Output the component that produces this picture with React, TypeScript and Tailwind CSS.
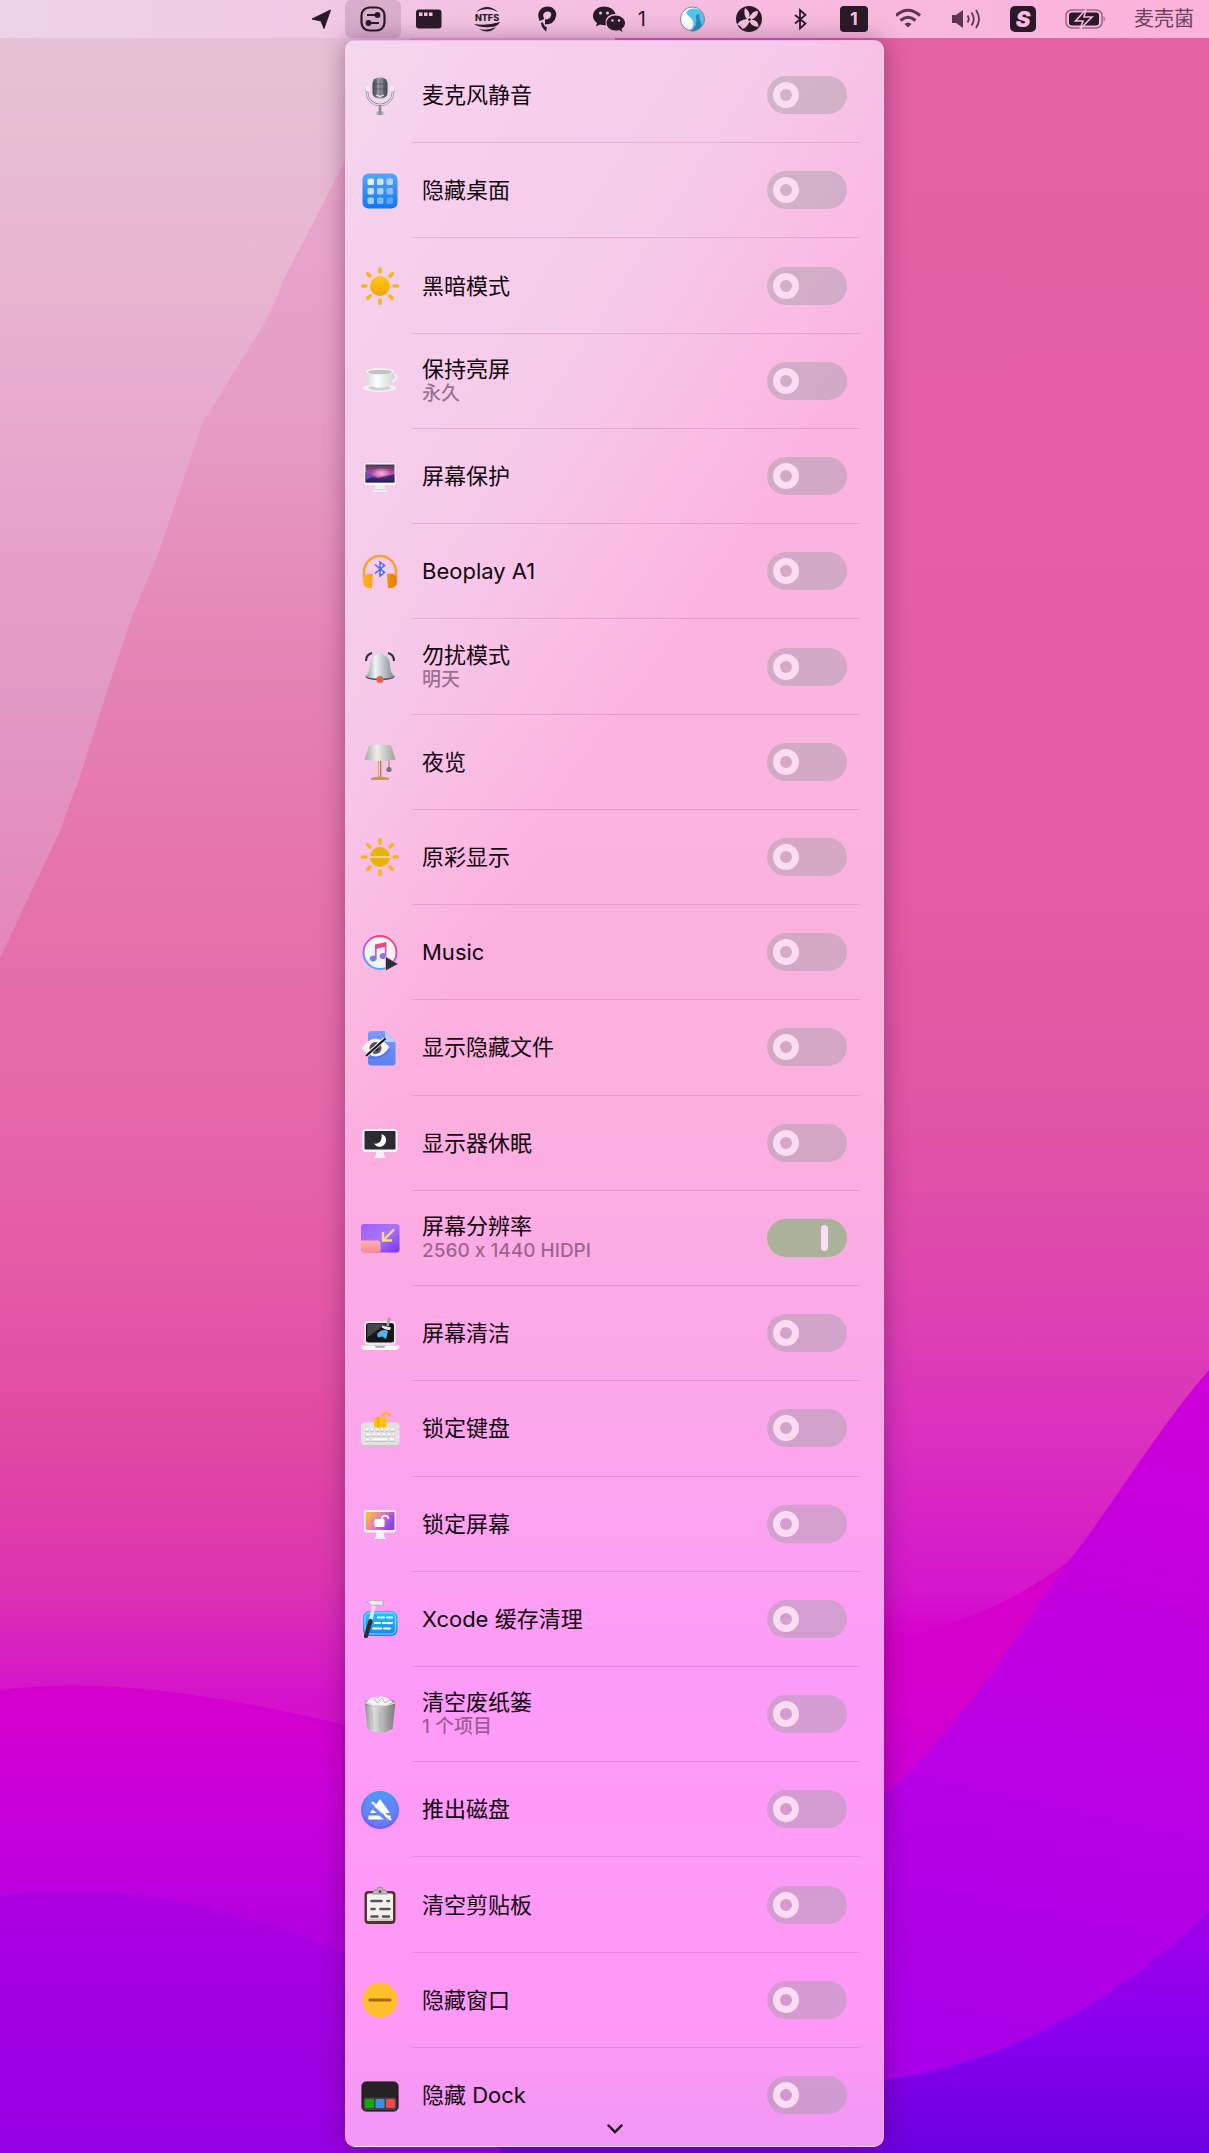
import React, { ReactNode, useState } from "react";
import clsx from "clsx";

type SwitchItem = {
  id: string;
  title: string;
  subtitle?: string;
  icon: ReactNode;
  on?: boolean;
};

const Icon = ({ children }: { children: ReactNode }) => (
  <svg viewBox="0 0 40 40" className="h-10 w-10 shrink-0" aria-hidden="true">
    {children}
  </svg>
);

const MicIcon = () => (
  <Icon>
    <defs>
      <linearGradient id="mic" x1="0" x2="1">
        <stop offset="0" stopColor="#3d3d48" />
        <stop offset="0.45" stopColor="#a9a9b6" />
        <stop offset="1" stopColor="#3a3a44" />
      </linearGradient>
      <linearGradient id="micStand" x1="0" x2="1">
        <stop offset="0" stopColor="#f4f4f6" />
        <stop offset="0.5" stopColor="#85858c" />
        <stop offset="1" stopColor="#f0f0f2" />
      </linearGradient>
    </defs>
    <path d="M7 13v3a13 13 0 0 0 26 0v-3" fill="none" stroke="#74747c" strokeWidth="2.4" />
    <path d="M7 12v4a13 13 0 0 0 26 0v-4" fill="none" stroke="#e3e3e7" strokeWidth="1.3" />
    <path d="M6 10h3v5H6zM31 10h3v5h-3z" fill="#f1f1f4" />
    <path d="M18.5 29h3v6l4.500 2v2H14v-2l4.500-2z" fill="url(#micStand)" />
    <rect x="12.500" y="1.500" width="15" height="21" rx="6" fill="url(#mic)" />
    <path d="M16 4v14M20 3v16M24 4v14M13 8h14M13 13h14" stroke="#4b4b57" strokeWidth="0.7" />
    <path d="M16 19q4 3 8 0" stroke="#efeff4" strokeWidth="1" fill="none" />
  </Icon>
);

const GridIcon = () => (
  <Icon>
    <defs>
      <linearGradient id="grid" x1="0" y1="0" x2="0" y2="1">
        <stop offset="0" stopColor="#56a5fb" />
        <stop offset="1" stopColor="#0d77f8" />
      </linearGradient>
    </defs>
    <rect x="2.500" y="2.500" width="35" height="35" rx="6" fill="url(#grid)" />
    {[0, 1, 2].map((r) =>
      [0, 1, 2].map((c) => (
        <rect
          key={`${r}${c}`}
          x={7.5 + c * 9.5}
          y={7.5 + r * 9.5}
          width="6.500"
          height="6.500"
          rx="1.500"
          fill="#fff"
          opacity={0.88 - (r + c) * 0.15}
        />
      ))
    )}
  </Icon>
);

const SunIcon = ({ split }: { split?: boolean }) => (
  <Icon>
    <defs>
      <linearGradient id="sun" x1="0" y1="0" x2="0" y2="1">
        <stop offset="0" stopColor="#ffcb12" />
        <stop offset="1" stopColor="#efa500" />
      </linearGradient>
    </defs>
    {[0, 45, 90, 135, 180, 225, 270, 315].map((deg) => (
      <path
        key={deg}
        d="M20 2.700v3.300"
        stroke="#fbb418"
        strokeWidth="3.600"
        strokeLinecap="round"
        transform={`rotate(${deg} 20 20)`}
      />
    ))}
    <circle cx="20" cy="20" r="10" fill={split ? "#e8b306" : "url(#sun)"} />
    {split && <path d="M10 20h20" stroke="#fbd9a0" strokeWidth="1.600" />}
  </Icon>
);

const CupIcon = () => (
  <Icon>
    <defs>
      <linearGradient id="cup" x1="0" x2="1">
        <stop offset="0" stopColor="#d9d9d7" />
        <stop offset="0.4" stopColor="#ffffff" />
        <stop offset="1" stopColor="#d4d4d2" />
      </linearGradient>
    </defs>
    <ellipse cx="19.500" cy="27" rx="17" ry="4" fill="#f1f0ef" />
    <ellipse cx="19.500" cy="27" rx="11" ry="2.600" fill="#d3d0d0" />
    <path d="M32 13c6-1 7 7-3 8" fill="none" stroke="#f3f1f1" strokeWidth="2" />
    <path d="M6 10c0 10 4 17 14 17s14-7 14-17z" fill="url(#cup)" />
    <ellipse cx="20" cy="10.500" rx="14" ry="3.300" fill="#f7f7f6" />
    <ellipse cx="20" cy="11" rx="12" ry="2.300" fill="#c2c3c1" />
  </Icon>
);

const ScreenSaverIcon = () => (
  <Icon>
    <defs>
      <linearGradient id="saver" x1="0" y1="0" x2="0" y2="1">
        <stop offset="0" stopColor="#4b3550" />
        <stop offset="0.55" stopColor="#c64fae" />
        <stop offset="1" stopColor="#1c2450" />
      </linearGradient>
      <radialGradient id="saverGlow" cx="0.55" cy="0.5" r="0.35">
        <stop offset="0" stopColor="#ffb3de" />
        <stop offset="1" stopColor="#ffb3de" stopOpacity="0" />
      </radialGradient>
    </defs>
    <path d="M15 27h10v5l2 3H13l2-3z" fill="#f0edf2" />
    <rect x="4" y="6" width="32" height="22" rx="2" fill="#fafafa" />
    <rect x="5.500" y="7.500" width="29" height="18" fill="url(#saver)" />
    <rect x="5.500" y="7.500" width="29" height="18" fill="url(#saverGlow)" />
    <path d="M5.500 15l12 6 17-4v8.500h-29z" fill="#2b1c66" opacity="0.700" />
    <path d="M5.500 15l12 6-6-1-6 3z" fill="#5a63d8" opacity="0.800" />
    <path d="M14 32.500h12" stroke="#d9d0d9" />
  </Icon>
);

const HeadphonesIcon = () => (
  <Icon>
    <defs>
      <linearGradient id="ear" x1="0" x2="1">
        <stop offset="0" stopColor="#ffb02e" />
        <stop offset="1" stopColor="#e98100" />
      </linearGradient>
    </defs>
    <path d="M4 26v-6a16 16 0 0 1 32 0v6" fill="none" stroke="#f5a13a" strokeWidth="2.600" />
    <path d="M13 22c-7-2-10 2-10 7s3 8 9 7zM27 22c7-2 10 2 10 7s-3 8-9 7z" fill="url(#ear)" />
    <path
      d="M15 12.500l9.500 8-4.500 3.500V10l4.500 3.500-9.500 8"
      fill="none"
      stroke="#3f6df2"
      strokeWidth="1.500"
    />
  </Icon>
);

const BellIcon = () => (
  <Icon>
    <defs>
      <linearGradient id="bell" x1="0" x2="1">
        <stop offset="0" stopColor="#8a9399" />
        <stop offset="0.35" stopColor="#eef4f7" />
        <stop offset="1" stopColor="#7b858b" />
      </linearGradient>
    </defs>
    <path d="M6 14c0-4 2-7 6-8M34 14c0-4-2-7-6-8" fill="none" stroke="#33303a" strokeWidth="2" />
    <path
      d="M20 5c2 0 2.500 1.500 2.500 2.500 5 1.500 7 5 7.500 10 .5 6 1 9 5 12-3 4-27 4-30 0 4-3 4.500-6 5-12 .5-5 2.500-8.500 7.500-10C17.500 6.500 18 5 20 5z"
      fill="url(#bell)"
    />
    <path d="M5.500 29.500c7 3 22 3 29 0-1 5-28 5-29 0z" fill="#4c5155" />
    <circle cx="20" cy="32.500" r="3.500" fill="#ee5f4c" />
  </Icon>
);

const LampIcon = () => (
  <Icon>
    <defs>
      <linearGradient id="lamp" x1="0" x2="1">
        <stop offset="0" stopColor="#a9a6a2" />
        <stop offset="0.4" stopColor="#f0efec" />
        <stop offset="1" stopColor="#a19d99" />
      </linearGradient>
    </defs>
    <path d="M29 18v9" stroke="#8c8389" strokeWidth="1" />
    <circle cx="29" cy="27.500" r="2.600" fill="#77717b" />
    <path d="M20 18v18" stroke="#b98a5c" strokeWidth="3" />
    <path d="M19.500 18v18" stroke="#e9c69c" strokeWidth="1" />
    <path d="M11 36q9-3 18 0v2H11z" fill="#c79658" />
    <path d="M9 3.500q11-2 22 0l4.500 14q-15.500 3-31 0z" fill="url(#lamp)" />
  </Icon>
);

const MusicIcon = () => (
  <Icon>
    <defs>
      <linearGradient id="ring" x1="0.7" y1="0" x2="0.3" y2="1">
        <stop offset="0" stopColor="#fb4060" />
        <stop offset="0.5" stopColor="#b35cf0" />
        <stop offset="1" stopColor="#3bb2f6" />
      </linearGradient>
      <linearGradient id="note" x1="0" y1="0" x2="0" y2="1">
        <stop offset="0" stopColor="#fb3f5c" />
        <stop offset="0.5" stopColor="#c060d8" />
        <stop offset="1" stopColor="#4e8cf6" />
      </linearGradient>
    </defs>
    <circle cx="20" cy="19.500" r="16.500" fill="#f6f3f6" stroke="url(#ring)" strokeWidth="2" />
    <path
      d="M15 11.500l11.500-2.500v14a3.500 3 0 1 1-1.800-2.500V14l-8 1.700v9.800a3.500 3 0 1 1-1.700-2.500z"
      fill="url(#note)"
    />
    <path d="M25.500 23.500l13 7.500-13 7z" fill="#2e2c3a" stroke="#fbb6de" strokeWidth="0.800" />
  </Icon>
);

const HiddenFileIcon = () => (
  <Icon>
    <defs>
      <linearGradient id="file" x1="0" y1="0" x2="0" y2="1">
        <stop offset="0" stopColor="#7a9bf8" />
        <stop offset="1" stopColor="#5a82ef" />
      </linearGradient>
    </defs>
    <path
      d="M11.500 3H25l10.500 11v20a3.500 3.500 0 0 1-3.500 3.500H11.500A3.500 3.500 0 0 1 8 34V6.500A3.500 3.500 0 0 1 11.500 3z"
      fill="url(#file)"
    />
    <path d="M25 3l10.500 11H27a2 2 0 0 1-2-2z" fill="#b9ccff" />
    <path d="M8 29q13 3 22-8" stroke="#4466c9" strokeWidth="2" fill="none" opacity="0.5" />
    <path d="M1.500 20.500Q14 2 29.500 19 18 37 1.500 20.500z" fill="#f7eff0" />
    <circle cx="15.500" cy="20" r="6" fill="#55525c" />
    <circle cx="15.500" cy="20" r="3" fill="#17151b" />
    <path d="M6 28L24.500 11" stroke="#f7eff0" strokeWidth="4" />
    <path d="M6 28L25.500 10.500" stroke="#17151b" strokeWidth="2.200" />
  </Icon>
);

const DisplaySleepIcon = () => (
  <Icon>
    <path d="M16 28h8v4l2 3H14l2-3z" fill="#f3f0f4" />
    <rect x="2.500" y="6" width="35" height="23" rx="3" fill="#f5f3f6" />
    <rect x="4.500" y="8" width="31" height="18.500" rx="1" fill="#2c2a33" />
    <path d="M21.500 11a6.500 6.500 0 1 1-7.500 9.500c6 1 8.500-4 7.500-9.500z" fill="#fff" />
  </Icon>
);

const ResolutionIcon = () => (
  <Icon>
    <defs>
      <linearGradient id="res" x1="0" y1="0" x2="1" y2="1">
        <stop offset="0" stopColor="#a45bfa" />
        <stop offset="0.5" stopColor="#a676fb" />
        <stop offset="1" stopColor="#7a30f5" />
      </linearGradient>
      <linearGradient id="resPink" x1="0" y1="0" x2="0" y2="1">
        <stop offset="0" stopColor="#ffb0ae" />
        <stop offset="1" stopColor="#ff8a96" />
      </linearGradient>
    </defs>
    <rect x="1" y="6" width="38.500" height="28.500" rx="3" fill="url(#res)" />
    <path d="M1 22.500h16.500a3 3 0 0 1 3 3v9H4a3 3 0 0 1-3-3z" fill="url(#resPink)" />
    <path d="M34 11.500L23.500 22M23 14v8.500h9" fill="none" stroke="#fbd591" strokeWidth="2.400" />
  </Icon>
);

const CleanIcon = () => (
  <Icon>
    <rect x="4.500" y="7" width="31" height="24" rx="4" fill="#ece7ec" />
    <rect x="6" y="9" width="28" height="19.500" rx="2.500" fill="#17171b" />
    <path d="M7.500 9.500h19L7 23.500z" fill="#45454b" />
    <path d="M17 20q5-6 11-3l-2 8-4-2.500-4 1z" fill="#4fb4e8" />
    <path d="M29.500 4l-2 8" stroke="#a2a2a6" strokeWidth="2.800" />
    <path d="M22 11.500l9 2-1 2.500q-5 0-8-2.500z" fill="#ececf0" />
    <path d="M1 31.500h38.500q0 4.500-5 4.500H6q-5 0-5-4.500z" fill="#fbfafb" />
    <path d="M14 31.500h12l-2 2.500h-8z" fill="#b7b1b8" />
  </Icon>
);

const KeyboardIcon = () => (
  <Icon>
    <rect x="1" y="14" width="38.500" height="23.500" rx="3.500" fill="#c9c5c9" />
    <rect x="1" y="13.500" width="38.500" height="22.500" rx="3.500" fill="#e4e1e3" />
    <path
      d="M5.500 21h3m2 0h3m2 0h3m2 0h3m2 0h3m2 0h4M5.500 26h5m2 0h3m2 0h3m2 0h3m2 0h3m2 0h2M5.500 31h4m2 0h16m2 0h5"
      stroke="#a09ca1"
      strokeWidth="2.800"
    />
    <path
      d="M5.500 20.500h3m2 0h3m2 0h3m2 0h3m2 0h3m2 0h4M5.500 25.500h5m2 0h3m2 0h3m2 0h3m2 0h3m2 0h2M5.500 30.500h4m2 0h16m2 0h5"
      stroke="#fff"
      strokeWidth="2.400"
    />
    <path d="M22 9c0-7 8.500-6 8-1" fill="none" stroke="#f7b70b" strokeWidth="2.200" />
    <rect x="14" y="8" width="12.500" height="10.500" rx="2" fill="#fbc10d" />
    <path d="M18 8v10.500" stroke="#e39c00" />
  </Icon>
);

const LockScreenIcon = () => (
  <Icon>
    <defs>
      <linearGradient id="lockScreen" x1="0" y1="0" x2="1" y2="0.4">
        <stop offset="0" stopColor="#fdc320" />
        <stop offset="0.5" stopColor="#e783b2" />
        <stop offset="1" stopColor="#9042e6" />
      </linearGradient>
    </defs>
    <path d="M16 28h8v4l2 3H14l2-3z" fill="#f3f0f4" />
    <rect x="4" y="6" width="32" height="22.500" rx="3" fill="#fbf8fb" />
    <rect x="5.500" y="8" width="29" height="18" rx="1" fill="url(#lockScreen)" />
    <path d="M21.500 16c0-6 7-5.500 7-1" fill="none" stroke="#fff" strokeWidth="1.700" />
    <rect x="14.500" y="15" width="10" height="8" rx="1.500" fill="#fff" />
  </Icon>
);

const XcodeIcon = () => (
  <Icon>
    <defs>
      <linearGradient id="xcode" x1="0" y1="0" x2="0" y2="1">
        <stop offset="0" stopColor="#25c4fb" />
        <stop offset="1" stopColor="#1585f4" />
      </linearGradient>
    </defs>
    <rect x="3" y="12" width="34.500" height="25" rx="6" fill="url(#xcode)" />
    <rect x="5" y="14" width="30.500" height="21" rx="4.500" fill="none" stroke="#9ce4ff" strokeWidth="0.900" />
    <path
      d="M18 18.500h6M27 18.500h5M15 24h5M23 24h9M13 29.500h8M24 29.500h6"
      stroke="#fff"
      strokeWidth="2"
      strokeLinecap="round"
    />
    <path d="M14 6L10.500 22" stroke="#e6e6e8" strokeWidth="3.600" />
    <path d="M10.500 22L6 37" stroke="#2b2b30" strokeWidth="4.200" strokeLinecap="round" />
    <path d="M6 3q6-3 12-1l5-.5v5.500l-5-1-7 .5q-1-3.500-5-3.500z" fill="#eeeef0" stroke="#9a9aa0" strokeWidth="0.600" />
  </Icon>
);

const TrashIcon = () => (
  <Icon>
    <defs>
      <linearGradient id="trash" x1="0" x2="1">
        <stop offset="0" stopColor="#8e8b8c" />
        <stop offset="0.3" stopColor="#dddcdc" />
        <stop offset="0.7" stopColor="#a8a6a7" />
        <stop offset="1" stopColor="#7c797a" />
      </linearGradient>
    </defs>
    <path d="M4.500 7h31l-3 27q-12.500 7-25 0z" fill="url(#trash)" />
    <ellipse cx="20" cy="7.500" rx="15.500" ry="4" fill="#8a8788" />
    <path d="M6 7l6-5 5 1 4-2 6 2 6 4-6 3H12z" fill="#f3f2f3" />
    <path d="M14 3l3 5 5-5 3 5 5-3" fill="none" stroke="#bcbabb" />
    <path d="M4.500 7.500q15.500 7 31 0" fill="none" stroke="#e6e5e6" strokeWidth="1.300" />
    <path d="M12 16l1 18M20 17v18M28 16l-1 18" stroke="#8d8a8b" strokeWidth="0.500" opacity="0.600" />
  </Icon>
);

const EjectIcon = () => (
  <Icon>
    <defs>
      <linearGradient id="eject" x1="0" y1="0" x2="0" y2="1">
        <stop offset="0" stopColor="#38a0f6" />
        <stop offset="1" stopColor="#7658f5" />
      </linearGradient>
    </defs>
    <circle cx="20" cy="20" r="19" fill="url(#eject)" />
    <circle cx="20" cy="20" r="16.500" fill="#6b8cfb" opacity="0.500" />
    <path d="M20 9l10 14H10zM8.500 25.500h22v4h-22z" fill="#fff" />
    <path d="M9 14l20 18" stroke="#628bf8" strokeWidth="3.500" />
    <path d="M12 12l19 18" stroke="#fff" strokeWidth="2.400" />
  </Icon>
);

const ClipboardIcon = () => (
  <Icon>
    <rect x="4.500" y="6" width="31" height="33" rx="4" fill="#57312f" />
    <rect x="7" y="8.500" width="26" height="27.500" rx="1.500" fill="#f3f2ef" />
    <path d="M8 33.500h24V36H10z" fill="#cdcac6" />
    <path d="M12 9l2-4h3a3 3 0 0 1 6 0h3l2 4z" fill="#bcb9b9" stroke="#807778" strokeWidth="0.700" />
    <circle cx="20" cy="6.500" r="1.600" fill="#6b4545" />
    <path
      d="M11.500 16h10M27.500 16h1.500M11.500 24h3M20.500 24h9M11.500 31.500h6M23 31.500h6"
      stroke="#55535c"
      strokeWidth="2.600"
      strokeLinecap="round"
    />
  </Icon>
);

const MinimizeIcon = () => (
  <Icon>
    <circle cx="20" cy="20" r="17.500" fill="#fdc02c" />
    <path d="M10 20h20" stroke="#a9650b" strokeWidth="3" strokeLinecap="round" />
  </Icon>
);

const DockIcon = () => (
  <Icon>
    <rect x="1.500" y="5.500" width="37" height="30" rx="5" fill="#232124" stroke="#6c5668" strokeWidth="1" />
    <rect x="3.500" y="21.500" width="33" height="12.500" rx="2.500" fill="#4b3e44" />
    <rect x="5" y="23" width="9" height="9" rx="1.500" fill="#12a812" />
    <rect x="15.500" y="23" width="9" height="9" rx="1.500" fill="#3d8fe0" />
    <rect x="26" y="23" width="9" height="9" rx="1.500" fill="#f0494b" />
  </Icon>
);

const ITEMS: SwitchItem[] = [
  { id: "mic", title: "麦克风静音", icon: <MicIcon /> },
  { id: "desktop", title: "隐藏桌面", icon: <GridIcon /> },
  { id: "dark", title: "黑暗模式", icon: <SunIcon /> },
  { id: "awake", title: "保持亮屏", subtitle: "永久", icon: <CupIcon /> },
  { id: "saver", title: "屏幕保护", icon: <ScreenSaverIcon /> },
  { id: "beoplay", title: "Beoplay A1", icon: <HeadphonesIcon /> },
  { id: "dnd", title: "勿扰模式", subtitle: "明天", icon: <BellIcon /> },
  { id: "night", title: "夜览", icon: <LampIcon /> },
  { id: "truetone", title: "原彩显示", icon: <SunIcon split /> },
  { id: "music", title: "Music", icon: <MusicIcon /> },
  { id: "files", title: "显示隐藏文件", icon: <HiddenFileIcon /> },
  { id: "sleep", title: "显示器休眠", icon: <DisplaySleepIcon /> },
  { id: "resolution", title: "屏幕分辨率", subtitle: "2560 x 1440 HIDPI", icon: <ResolutionIcon />, on: true },
  { id: "clean", title: "屏幕清洁", icon: <CleanIcon /> },
  { id: "keyboard", title: "锁定键盘", icon: <KeyboardIcon /> },
  { id: "lock", title: "锁定屏幕", icon: <LockScreenIcon /> },
  { id: "xcode", title: "Xcode 缓存清理", icon: <XcodeIcon /> },
  { id: "trash", title: "清空废纸篓", subtitle: "1 个项目", icon: <TrashIcon /> },
  { id: "eject", title: "推出磁盘", icon: <EjectIcon /> },
  { id: "clipboard", title: "清空剪贴板", icon: <ClipboardIcon /> },
  { id: "windows", title: "隐藏窗口", icon: <MinimizeIcon /> },
  { id: "dock", title: "隐藏 Dock", icon: <DockIcon /> },
];

const Wallpaper = () => (
  <svg
    viewBox="0 0 1209 2153"
    preserveAspectRatio="none"
    className="absolute inset-0 h-full w-full"
    aria-hidden="true"
  >
    <defs>
      <linearGradient id="wLeft" gradientUnits="userSpaceOnUse" x1="0" y1="0" x2="0" y2="1700">
        <stop offset="0.08" stopColor="#e8a8cc" />
        <stop offset="0.25" stopColor="#e69cc4" />
        <stop offset="0.4" stopColor="#e482b4" />
        <stop offset="0.51" stopColor="#e674ac" />
        <stop offset="0.65" stopColor="#e468a8" />
        <stop offset="0.75" stopColor="#e45aa6" />
        <stop offset="0.85" stopColor="#e048a2" />
        <stop offset="0.93" stopColor="#dc34b0" />
        <stop offset="1" stopColor="#d412cc" />
      </linearGradient>
      <linearGradient id="wRight" gradientUnits="userSpaceOnUse" x1="0" y1="0" x2="0" y2="1640">
        <stop offset="0" stopColor="#e462a4" />
        <stop offset="0.55" stopColor="#e45ca2" />
        <stop offset="0.67" stopColor="#e056a4" />
        <stop offset="0.78" stopColor="#de46ae" />
        <stop offset="0.87" stopColor="#da32be" />
        <stop offset="0.97" stopColor="#d416cc" />
        <stop offset="1" stopColor="#d600cc" />
      </linearGradient>
      <linearGradient id="wRidge" gradientUnits="userSpaceOnUse" x1="0" y1="38" x2="0" y2="960">
        <stop offset="0" stopColor="#e6c2d4" />
        <stop offset="0.24" stopColor="#e8b6d0" />
        <stop offset="0.5" stopColor="#e6a4cc" />
        <stop offset="0.72" stopColor="#e298c4" />
        <stop offset="1" stopColor="#e486ba" />
      </linearGradient>
      <linearGradient id="wMagenta" gradientUnits="userSpaceOnUse" x1="0" y1="1560" x2="0" y2="1950">
        <stop offset="0.3" stopColor="#d600cc" />
        <stop offset="0.65" stopColor="#c800da" />
        <stop offset="1" stopColor="#b000e0" />
      </linearGradient>
      <linearGradient id="wViolet" gradientUnits="userSpaceOnUse" x1="0" y1="1880" x2="0" y2="2153">
        <stop offset="0" stopColor="#ae00e2" />
        <stop offset="1" stopColor="#9400e2" />
      </linearGradient>
      <linearGradient id="wWave" gradientUnits="userSpaceOnUse" x1="1209" y1="1370" x2="1050" y2="2080">
        <stop offset="0" stopColor="#ce00d8" />
        <stop offset="0.6" stopColor="#b800e4" />
        <stop offset="1" stopColor="#a800e8" />
      </linearGradient>
      <linearGradient id="wBlue" gradientUnits="userSpaceOnUse" x1="0" y1="1912" x2="0" y2="2153">
        <stop offset="0" stopColor="#9e00e8" />
        <stop offset="0.5" stopColor="#8800ee" />
        <stop offset="1" stopColor="#6c00e0" />
      </linearGradient>
    </defs>
    <rect width="1209" height="2153" fill="url(#wLeft)" />
    <rect x="615" width="594" height="2153" fill="url(#wRight)" />
    <path
      d="M0 0H430L343 165 283 281C268 325 240 360 223 390S205 412 197 439L160 549 133 614 113 673 80 776 60 831 0 958Z"
      fill="url(#wRidge)"
    />
    <path d="M0 1690Q130 1672 345 1725L615 1700 884 1642Q990 1620 1068 1562L1209 1700V2153H0Z" fill="url(#wMagenta)" />
    <path d="M0 1896Q150 1872 345 1953L620 2050V2153H0Z" fill="url(#wViolet)" />
    <path d="M1209 1370C1160 1425 1110 1510 1068 1562 1010 1645 960 1730 884 1795L615 1950V2153H1209Z" fill="url(#wWave)" />
    <path d="M1209 1912Q1060 2055 884 2080L500 2110V2153H1209Z" fill="url(#wBlue)" />
  </svg>
);

const MenuBar = () => (
  <header className="relative flex h-[38px] items-center justify-end gap-7 bg-linear-to-r from-[#ecd4e8] via-[#f5bfe0] to-[#fbb2da] pr-[15px] text-[#2a1a28]">
    <svg viewBox="0 0 24 24" className="h-6 w-6 shrink-0" fill="currentColor" aria-hidden="true">
      <path d="M21.500 3L15 21.500 12 14 3 12z" stroke="currentColor" strokeLinejoin="round" />
    </svg>
    <button
      aria-label="开关"
      className="-mx-4 flex h-[38px] w-14 shrink-0 items-center justify-center rounded-md bg-[#d9aecb]"
    >
      <svg viewBox="0 0 26 26" className="h-[26px] w-[26px]" fill="none" stroke="currentColor" strokeWidth="2.200">
        <rect x="1.500" y="1.500" width="23" height="23" rx="8" />
        <path d="M7 9h9M10 17h9" />
        <circle cx="17.500" cy="9" r="1.800" fill="currentColor" />
        <circle cx="8.500" cy="17" r="1.800" fill="currentColor" />
      </svg>
    </button>
    <svg viewBox="0 0 32 26" className="h-[26px] w-8 shrink-0" aria-hidden="true">
      <rect x="3" y="3.500" width="25.500" height="19" rx="3" fill="currentColor" />
      <path d="M6 6.500h3.500V10H6zM11 6.500h3.500V10H11zM16 6.500h3.500V10H16z" fill="#f3c4e0" />
    </svg>
    <svg viewBox="0 0 28 28" className="h-7 w-7 shrink-0" fill="currentColor" aria-hidden="true">
      <path d="M3 7Q14-3 25 7 14 1 3 7zM1 19q13 2 26-2-2 5-10 5-10 1-16-3zM6 24q9 2 17-2-7 8-17 2z" />
      <text x="14" y="16" textAnchor="middle" fontSize="9" fontWeight="800" fontFamily="Inter">
        NTFS
      </text>
    </svg>
    <svg viewBox="0 0 36 28" className="h-7 w-9 shrink-0" fill="none" stroke="currentColor" aria-hidden="true">
      <path d="M13 15C9.500 8 14 4 18.500 4c5 0 7 4 6 7-1 5-5 6-8.500 6" strokeWidth="5" />
      <circle cx="18" cy="10" r="1.800" fill="#f4c2df" stroke="none" />
      <path d="M14 17.500q1 4 4 5l-1 4q-5-4-5-9z" fill="currentColor" stroke="none" />
    </svg>
    <div className="flex w-[59px] shrink-0 items-center justify-between pr-[6px] text-xl">
      <svg viewBox="0 0 32 26" className="h-[26px] w-8" fill="currentColor" aria-hidden="true">
        <path d="M11 .5C5 .5 0 4.500 0 10c0 3 1.500 5 4 7l-1 3.500 4-2q3 1 6 .5c-2-6 3-11.500 9.500-11C21.500 3.500 16.500.5 11 .5z" />
        <path d="M22.500 9.500c-5 0-9 3.500-9 7.500s4 7.500 9 7.500q2 0 3.500-.5l3.500 2-1-3c2-1.500 3.500-3.500 3.500-6 0-4-4.500-7.500-9.500-7.500z" />
        <circle cx="7.500" cy="7" r="1.500" fill="#f5c2e0" />
        <circle cx="14.500" cy="7" r="1.500" fill="#f5c2e0" />
        <circle cx="19.500" cy="14.500" r="1.200" fill="#f5c2e0" />
        <circle cx="26" cy="14.500" r="1.200" fill="#f5c2e0" />
      </svg>
      <span>1</span>
    </div>
    <svg viewBox="0 0 28 28" className="h-7 w-7 shrink-0" aria-hidden="true">
      <circle cx="12.500" cy="14" r="12" fill="#fff" />
      <path d="M6 7C12 0 24.500 4 24.500 14S15 26.500 9 25.500c6-3 5-9 2-12.500-2-2-4-3-5-6z" fill="#4fc6ee" />
      <path d="M11 26q7-5 5-14 0-3 3-3 1 8 3 11-4 7-11 6z" fill="#2a86bd" />
      <circle cx="12.500" cy="14" r="12" fill="none" stroke="#8d7f92" />
    </svg>
    <svg viewBox="0 0 28 28" className="h-7 w-7 shrink-0" aria-hidden="true">
      <circle cx="13" cy="14" r="13" fill="currentColor" />
      <path
        d="M11 14Q7 10 9 3q5 3 4.500 9Q17 5 22 6q0 6-6.500 8.500 7 1 7 7-6 1-9-5Q11 23 6 24q-1-4-5-4 2-5 10-6z"
        fill="#f7bfe0"
      />
      <circle cx="13.500" cy="14.500" r="1.300" fill="currentColor" />
    </svg>
    <svg viewBox="0 0 20 24" className="h-6 w-5 shrink-0" fill="none" stroke="currentColor" strokeWidth="1.800" aria-hidden="true">
      <path d="M3 8l10.500 8.500-5.500 5V3l5.500 5L3 16.500" />
    </svg>
    <div className="flex h-[26px] w-7 shrink-0 items-center justify-center rounded bg-[#2a1a28] text-lg font-bold text-[#f8bcdf]">
      1
    </div>
    <svg viewBox="0 0 28 22" className="h-[22px] w-7 shrink-0" fill="none" stroke="#5a3650" strokeWidth="3" aria-hidden="true">
      <path d="M0 7.500q12-10.500 24 0M4.500 12.500q7.500-6.500 15 0" />
      <path d="M8.500 16q3.500-3 7 0L12 19.500z" fill="#5a3650" stroke="none" />
    </svg>
    <svg viewBox="0 0 30 24" className="h-6 w-[30px] shrink-0" fill="none" stroke="#5a3650" strokeWidth="1.800" aria-hidden="true">
      <path d="M0 8h4l7-5v18l-7-5H0z" fill="#5a3650" stroke="none" />
      <path d="M15.500 8.500q2.500 3.500 0 7M19.500 5.500q4.500 6.500 0 13M24 3q6 9 0 18" />
    </svg>
    <svg viewBox="0 0 26 26" className="h-[26px] w-[26px] shrink-0" aria-hidden="true">
      <rect width="26" height="26" rx="5" fill="currentColor" />
      <text x="13" y="20.500" textAnchor="middle" fontSize="22" fontWeight="900" fontStyle="italic" fontFamily="Inter" fill="#f9bbdf">
        S
      </text>
    </svg>
    <svg viewBox="0 0 42 24" className="h-6 w-[42px] shrink-0" aria-hidden="true">
      <rect x="2" y="3" width="36" height="18" rx="5.500" fill="none" stroke="#9c6487" strokeWidth="1.500" />
      <rect x="5" y="5.500" width="30" height="13" rx="3" fill="currentColor" />
      <path d="M39.500 9q3 3 0 6z" fill="#9c6487" />
      <path d="M22 2.500L11.500 14H19l-3 8 12-12h-8z" fill="currentColor" stroke="#f9b8dc" strokeWidth="1.600" />
    </svg>
    <span className="shrink-0 text-xl text-[#6a4260]">麦壳菌</span>
  </header>
);

const SwitchRow = ({ item, last }: { item: SwitchItem; last: boolean }) => {
  const [checked, setChecked] = useState(!!item.on);

  return (
    <li className="flex min-h-20 flex-1">
      <label className="flex w-full items-center pr-[23px] pl-[14px]">
        {item.icon}
        <span
          className={clsx(
            "ml-3 flex h-full flex-1 items-center justify-between border-b pr-[13px] pl-[10px]",
            last ? "border-transparent" : "border-[#702060]/15"
          )}
        >
          <span className="flex flex-col">
            <span className="text-[22px] leading-[26px] text-[#12060f]">{item.title}</span>
            {item.subtitle && (
              <span className="text-[19px] leading-6 font-medium text-[#4a2444]/55">
                {item.subtitle}
              </span>
            )}
          </span>
          <input
            type="checkbox"
            role="switch"
            checked={checked}
            onChange={() => setChecked(!checked)}
            className="flex h-[38px] w-20 shrink-0 appearance-none items-center rounded-full bg-[#a29ea5]/45 px-[6px] before:block before:h-[26px] before:w-[26px] before:rounded-full before:border-[7px] before:border-[#fbdcf3] checked:justify-end checked:bg-[#aab29a] checked:pr-[19px] checked:before:w-[7px] checked:before:border-0 checked:before:bg-[#fbdcf3]"
          />
        </span>
      </label>
    </li>
  );
};

const App = () => {
  return (
    <div className="relative flex min-h-screen flex-col overflow-hidden font-['Inter','Noto_Sans_CJK_SC',sans-serif] [font-feature-settings:'calt'_0]">
      <Wallpaper />
      <MenuBar />
      <main className="relative flex flex-1 justify-center pt-[2px] pb-[6px] pl-5">
        <section className="relative flex w-[539px] max-w-full flex-col rounded-[10px] border border-white/25 bg-[linear-gradient(123deg,#f4d9ec_0%,#f6d0ed_8%,#f6cbea_22%,#f9bee500_38%),linear-gradient(180deg,#fab4e2_0%,#fbb4e0_30%,#fcb0de_50%,#fba6ec_66%,#fd9cf8_78%,#ff98f6_94%,#f098f4_100%)] pt-[7px] pb-[3px] shadow-[0_0_24px_rgba(60,0,60,0.4)]">
          <ul className="flex flex-1 flex-col">
            {ITEMS.map((item, i) => (
              <SwitchRow key={item.id} item={item} last={i === ITEMS.length - 1} />
            ))}
          </ul>
          <button aria-label="更多" className="absolute bottom-3 left-1/2 -translate-x-1/2">
            <svg viewBox="0 0 16 10" className="h-[10px] w-4" fill="none" stroke="#12060f" strokeWidth="2.400">
              <path d="M1.500 1.500L8 8l6.500-6.500" strokeLinecap="round" />
            </svg>
          </button>
        </section>
      </main>
    </div>
  );
};

export default App;
